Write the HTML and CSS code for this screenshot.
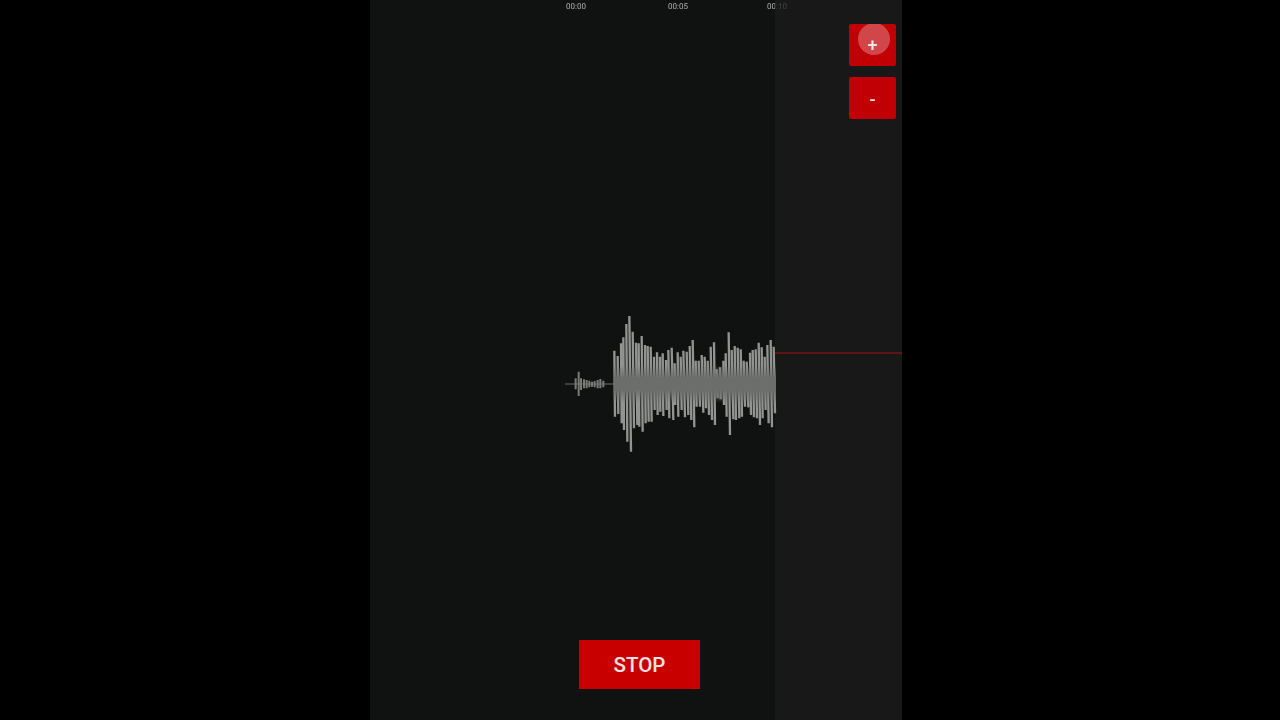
FILE: index.html
```html
<!DOCTYPE html>
<html lang="en">
<head>
<meta charset="utf-8">
<title>Recorder</title>
<link rel="stylesheet" href="styles.css">
</head>
<body>
<main class="panel">
  <section class="recorded">
    <div class="times">
      <span class="time">00:00</span>
      <span class="time time-5">00:05</span>
      <span class="time time-10">00:10</span>
    </div>
    <svg class="wave" viewBox="0 0 690 435" aria-hidden="true">
      <defs>
        <linearGradient id="core" x1="0" y1="0" x2="0" y2="1">
          <stop offset="0" stop-color="#6c6e6c" stop-opacity="0"/>
          <stop offset=".35" stop-color="#6c6e6c"/>
          <stop offset=".65" stop-color="#6c6e6c"/>
          <stop offset="1" stop-color="#6c6e6c" stop-opacity="0"/>
        </linearGradient>
      </defs>
      <path class="wave-thin" d="M15 222H162"/>
      <path class="wave-small" d="M47 205V238M56 185V258M63 205V240M72 208V235M80 210V235M88 212V232M96 215V230M104 213V232M113 210V235M121 207V235M130 212V232"/>
      <path class="wave-bars" d="M163 122L165 320M173 138L175 312M183 100L185 340M190 82L192 360M199 42L202 395M208 18L213 425M218 65L222 355M228 98L232 345M236 100L238 350M245 78L248 365M255 105L257 340M263 108L266 335M272 110L275 335M282 140L284 300M291 127L293 315M300 140L301 305M308 130L310 318M318 150L320 300M325 120L328 325M335 113L340 330M344 160L346 285M353 127L355 320M362 140L365 300M370 122L375 322M380 125L385 315M389 108L394 330M398 90L403 352M407 152L410 290M416 152L420 290M425 135L430 308M434 140L438 295M443 152L447 315M452 110L456 330M462 97L465 345M470 178L473 265M480 172L482 268M490 152L492 285M497 130L500 320M506 67L510 375M515 120L520 328M524 108L528 330M533 113L538 325M542 118L546 320M551 152L555 290M560 155L565 292M570 128L573 315M578 120L582 322M587 118L591 325M596 98L600 345M605 112L608 325M614 140L617 300M622 105L626 340M632 90L636 352M641 110L645 310"/>
      <rect x="161" y="165" width="487" height="114" fill="url(#core)"/>
    </svg>
  </section>
  <aside class="pending">
    <button class="zoom-btn" type="button"><span class="ripple"></span><span class="zoom-label">+</span></button>
    <button class="zoom-btn zoom-minus" type="button"><span class="zoom-label">-</span></button>
    <div class="level"></div>
  </aside>
  <button class="stop" type="button">STOP</button>
</main>
</body>
</html>
```
FILE: styles.css
```css
* { box-sizing: border-box; }
html, body { margin: 0; height: 100%; background: #000; overflow: hidden; }
body {
  padding-left: 370px;
  font-family: Roboto, "Liberation Sans", sans-serif;
  text-rendering: geometricPrecision;
}

.panel {
  position: relative;
  display: flex;
  width: 532px;
  height: 720px;
  background: #101211;
  filter: blur(0.4px);
}

.recorded {
  display: flex;
  flex-direction: column;
  width: 405px;
  flex-shrink: 0;
}

.times {
  display: flex;
  align-items: center;
  height: 14px;
  padding-left: 196px;
}
.time {
  flex: 0 0 20px;
  font-size: 8px;
  line-height: 14px;
  text-align: center;
  color: #b0b0b0;
  filter: blur(0.35px);
}
.time-5 { margin-left: 82px; }
.time-10 { margin-left: 79px; }

.wave {
  position: relative;
  z-index: 2;
  display: block;
  flex-shrink: 0;
  width: 230px;
  height: 145px;
  margin: 296px 0 0 190px;
  filter: blur(0.5px);
}
.wave-thin { fill: none; stroke: #6a6c6a; stroke-width: 3; }
.wave-small { fill: none; stroke: #7a7c7a; stroke-width: 6; }
.wave-bars { fill: none; stroke: #929492; stroke-width: 7; }

.pending {
  position: relative;
  z-index: 1;
  display: flex;
  flex-direction: column;
  align-items: flex-start;
  flex: 1;
  padding-top: 24px;
  background: rgba(28, 27, 28, 0.72);
}

.zoom-btn {
  position: relative;
  overflow: hidden;
  width: 47px;
  height: 42px;
  margin-left: 74px;
  padding: 0;
  border: 0;
  border-radius: 2px;
  background: #c00004;
  color: #f4e4e4;
  font-family: inherit;
  font-size: 18px;
  font-weight: 500;
  line-height: 42px;
}
.zoom-minus { margin-top: 11px; padding-top: 2px; }

.zoom-label { position: relative; }

.ripple {
  position: absolute;
  left: 9px;
  top: -1px;
  width: 32px;
  height: 32px;
  border-radius: 50%;
  background: rgba(255, 255, 255, 0.28);
  filter: blur(0.6px);
}

.level {
  align-self: stretch;
  height: 2px;
  margin-top: 233px;
  background: #5c1418;
}

.stop {
  position: absolute;
  left: 209px;
  bottom: 31px;
  z-index: 3;
  width: 121px;
  height: 49px;
  padding: 0;
  border: 0;
  background: #c80000;
  color: #f0e4e4;
  font-family: inherit;
  font-size: 20.5px;
  font-weight: 500;
}
```
